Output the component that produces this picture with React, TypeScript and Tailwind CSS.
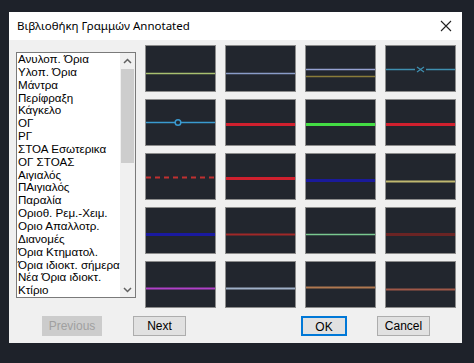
import React from 'react';

type Line = { y: number; w: number; color: string; dash?: boolean; marker?: 'x' | 'o' };

const items = [
  'Ανυλοπ. Όρια',
  'Υλοπ. Όρια',
  'Μάντρα',
  'Περίφραξη',
  'Κάγκελο',
  'ΟΓ',
  'ΡΓ',
  'ΣΤΟΑ Εσωτερικα',
  'ΟΓ ΣΤΟΑΣ',
  'Αιγιαλός',
  'ΠΑιγιαλός',
  'Παραλία',
  'Οριοθ. Ρεμ.-Χειμ.',
  'Οριο Απαλλοτρ.',
  'Διανομές',
  'Όρια Κτηματολ.',
  'Όρια ιδιοκτ. σήμερα',
  'Νέα Όρια ιδιοκτ.',
  'Κτίριο',
];

const swatches: Line[][] = [
  [{ y: 27.5, w: 1.5, color: '#a9c070' }],
  [{ y: 27.5, w: 1.5, color: '#8a9cc8' }],
  [
    { y: 23.5, w: 1.5, color: '#96a2d2' },
    { y: 30.5, w: 1.5, color: '#8a7c3a' },
  ],
  [{ y: 23.5, w: 1.5, color: '#3f8fb0', marker: 'x' }],
  [{ y: 22.5, w: 1.5, color: '#3a9ad0', marker: 'o' }],
  [{ y: 24.5, w: 3, color: '#d0202e' }],
  [{ y: 24.5, w: 3, color: '#44dc44' }],
  [{ y: 24.5, w: 3, color: '#d0202e' }],
  [{ y: 23.5, w: 2, color: '#c03030', dash: true }],
  [{ y: 24.5, w: 3, color: '#d0202e' }],
  [{ y: 26.5, w: 3, color: '#1a1a9a' }],
  [{ y: 27.5, w: 2, color: '#c0b870' }],
  [{ y: 26.5, w: 3, color: '#1a1aa0' }],
  [{ y: 26.5, w: 2, color: '#a02828' }],
  [{ y: 26.5, w: 1.5, color: '#7ac890' }],
  [{ y: 26.5, w: 3, color: '#6a2424' }],
  [{ y: 26.5, w: 2, color: '#b040c8' }],
  [{ y: 26.5, w: 2, color: '#a0b0c8' }],
  [{ y: 25.5, w: 2, color: '#b07850' }],
  [{ y: 27.5, w: 2, color: '#a05848' }],
];

function Swatch({ lines }: { lines: Line[] }) {
  return (
    <div className="h-[47px] w-[71px] border border-[#8c8c8c] bg-[#22262e]">
      <svg width="69" height="45" viewBox="0 0 69 45" className="block">
        {lines.map((l, i) => (
          <g key={i}>
            <line
              x1="0"
              x2="69"
              y1={l.y}
              y2={l.y}
              stroke={l.color}
              strokeWidth={l.w}
              strokeDasharray={l.dash ? '5 4' : undefined}
            />
            {l.marker === 'x' && (
              <>
                <rect x="29" y={l.y - 3} width="11" height="6" fill="#22262e" />
                <path
                  d={`M31 ${l.y - 2.5} L38 ${l.y + 2.5} M31 ${l.y + 2.5} L38 ${l.y - 2.5}`}
                  stroke={l.color}
                  strokeWidth="1.2"
                />
              </>
            )}
            {l.marker === 'o' && (
              <circle cx="32" cy={l.y} r="2.8" fill="#22262e" stroke={l.color} strokeWidth="1.5" />
            )}
          </g>
        ))}
      </svg>
    </div>
  );
}

export default function App() {
  return (
    <div className="h-[363px] w-[474px] bg-[#1e222a] pl-[9px] pt-[12px] font-['Liberation_Sans',Arial,sans-serif]">
      <div className="flex h-[331px] w-[453px] flex-col bg-[#f0f0f0]">
        <div className="flex h-[28px] items-center justify-between bg-white pl-[8px] pr-[10px]">
          <span className="font-['Noto_Sans',sans-serif] text-[11.5px] text-black">
            Βιβλιοθήκη Γραμμών Annotated
          </span>
          <svg width="12" height="12" viewBox="0 0 12 12">
            <path d="M1 1 L11 11 M11 1 L1 11" stroke="#222" strokeWidth="1.1" />
          </svg>
        </div>
        <div className="flex pl-[7px] pt-[5px]">
          <div className="mt-[7px] flex h-[246px] w-[120px] border border-[#7a7a7a] bg-white">
            <div className="w-[103px] overflow-hidden pl-[1px]">
              {items.map((t) => (
                <div
                  key={t}
                  className="h-[12.85px] whitespace-nowrap text-[11.6px] leading-[12.85px] text-black"
                >
                  {t}
                </div>
              ))}
            </div>
            <div className="flex w-[15px] flex-col items-center bg-[#f0f0f0]">
              <div className="flex h-[15px] items-center justify-center">
                <svg width="9" height="6" viewBox="0 0 9 6">
                  <path d="M1 5 L4.5 1.5 L8 5" fill="none" stroke="#606060" strokeWidth="1.5" />
                </svg>
              </div>
              <div className="mt-[1px] h-[94px] w-[13px] bg-[#cdcdcd]" />
              <div className="flex-1" />
              <div className="flex h-[15px] items-center justify-center">
                <svg width="9" height="6" viewBox="0 0 9 6">
                  <path d="M1 1 L4.5 4.5 L8 1" fill="none" stroke="#606060" strokeWidth="1.5" />
                </svg>
              </div>
            </div>
          </div>
          <div className="ml-[9px] grid grid-cols-[repeat(4,71px)] gap-x-[9px] gap-y-[7px]">
            {swatches.map((s, i) => (
              <Swatch key={i} lines={s} />
            ))}
          </div>
        </div>
        <div className="mt-[8px] flex pl-[33px] text-[12px]">
          <button className="h-[20px] w-[60px] border border-[#cccccc] bg-[#cccccc] text-[#a0a0a0]">
            Previous
          </button>
          <button className="ml-[31px] h-[20px] w-[53px] border border-[#adadad] bg-[#e1e1e1] text-black">
            Next
          </button>
          <button className="ml-[115px] h-[20px] w-[46px] border-2 border-[#0078d7] bg-[#e1e1e1] text-black">
            OK
          </button>
          <button className="ml-[30px] h-[20px] w-[53px] border border-[#adadad] bg-[#e1e1e1] text-black">
            Cancel
          </button>
        </div>
      </div>
    </div>
  );
}
